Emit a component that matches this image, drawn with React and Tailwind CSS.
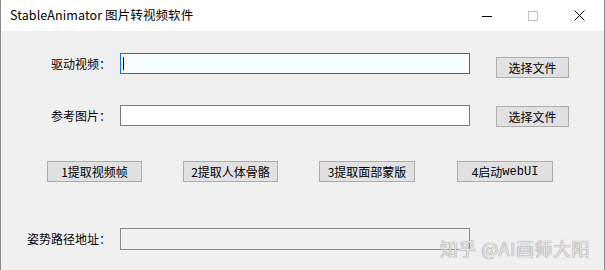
const font = { fontFamily: '"Noto Sans CJK SC", "Liberation Sans", sans-serif' }

function WinButton({ children, className = '' }) {
  return (
    <button
      className={`h-[21px] bg-[#e1e1e1] border border-[#adadad] text-[12px] leading-none text-black flex items-center justify-center ${className}`}
    >
      {children}
    </button>
  )
}

function Label({ children }) {
  return (
    <div className="w-[111px] shrink-0 text-right text-[12px] leading-[21px] text-black pr-[1px]">
      {children}
    </div>
  )
}

export default function App() {
  return (
    <div
      className="relative w-[605px] h-[270px] overflow-hidden bg-[#f0f0f0] border-x border-[#8a8a8a] flex flex-col"
      style={font}
    >
      {/* 标题栏 */}
      <div className="h-[31px] shrink-0 bg-white flex items-center">
        <span className="ml-[9px] text-[12.5px] text-black tracking-[0.1px]">
          StableAnimator 图片转视频软件
        </span>
        <div className="ml-auto flex items-center h-full">
          <div className="w-[46px] h-full flex items-center justify-center">
            <svg width="10" height="10" viewBox="0 0 10 10">
              <line x1="0" y1="5.5" x2="10" y2="5.5" stroke="#000" strokeWidth="1" />
            </svg>
          </div>
          <div className="w-[46px] h-full flex items-center justify-center">
            <svg width="10" height="10" viewBox="0 0 10 10">
              <rect x="0.5" y="0.5" width="9" height="9" fill="none" stroke="#c4c4c4" strokeWidth="1" />
            </svg>
          </div>
          <div className="w-[46px] h-full flex items-center justify-center mr-[2px]">
            <svg width="11" height="11" viewBox="0 0 11 11">
              <path d="M0.5 0.5 L10.5 10.5 M10.5 0.5 L0.5 10.5" stroke="#000" strokeWidth="1" />
            </svg>
          </div>
        </div>
      </div>

      {/* 驱动视频 */}
      <div className="mt-[22px] flex items-start">
        <Label>驱动视频：</Label>
        <div className="ml-[8px] w-[350px] h-[21px] border border-[#0078d7] bg-[#f8fdff] flex items-center">
          <span className="ml-[2px] w-px h-[13px] bg-black" />
        </div>
        <WinButton className="ml-[26px] mt-[4px] w-[73px]">选择文件</WinButton>
      </div>

      {/* 参考图片 */}
      <div className="mt-[27px] flex items-start">
        <Label>参考图片：</Label>
        <div className="ml-[8px] w-[350px] h-[21px] border border-[#7a7a7a] bg-white" />
        <WinButton className="ml-[26px] mt-[1px] w-[73px]">选择文件</WinButton>
      </div>

      {/* 操作按钮 */}
      <div className="mt-[34px] flex items-start">
        <WinButton className="ml-[46px] w-[95px]">1提取视频帧</WinButton>
        <WinButton className="ml-[41px] w-[95px]">2提取人体骨骼</WinButton>
        <WinButton className="ml-[41px] w-[96px]">3提取面部蒙版</WinButton>
        <WinButton className="ml-[42px] w-[96px]">
          4启动<span style={{ fontFamily: '"Liberation Mono", monospace' }}>webUI</span>
        </WinButton>
      </div>

      {/* 姿势路径 */}
      <div className="mt-[46px] flex items-start">
        <Label>姿势路径地址：</Label>
        <div className="ml-[8px] w-[350px] h-[22px] border border-[#8a8a8a] bg-[#f0f0f0]" />
      </div>

      {/* 水印 */}
      <div
        className="absolute right-[14px] bottom-[13px] text-[18px] leading-none text-[#e4e4e4] tracking-[0.5px]"
        style={{ textShadow: '0 0 1px #9a9a9a, 0 0 1px #9a9a9a' }}
      >
        知乎 @AI画师大阳
      </div>
    </div>
  )
}
